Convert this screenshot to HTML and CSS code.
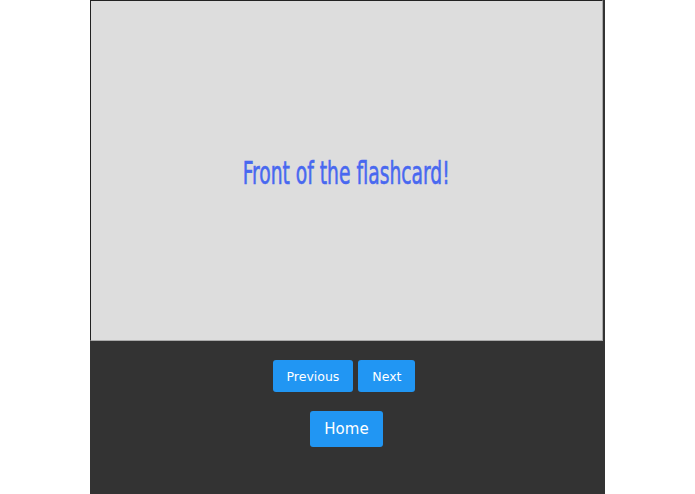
FILE: index.html
```html
<!DOCTYPE html>
<html>
<head>
<meta charset="utf-8">
<title>Flashcards</title>
<link rel="stylesheet" href="styles.css">
</head>
<body>
  <div class="deck">
    <div class="card">
      <span class="card-text">Front of the flashcard!</span>
    </div>
    <div class="controls controls-nav">
      <button class="btn">Previous</button>
      <button class="btn">Next</button>
    </div>
    <div class="controls">
      <button class="btn btn-home">Home</button>
    </div>
  </div>
</body>
</html>
```

FILE: styles.css
```css
html, body {
  margin: 0;
  padding: 0;
  background: #fff;
  height: 100%;
}

.deck {
  width: 515px;
  min-height: 100%;
  margin: 0 auto;
  background: #333;
  box-sizing: border-box;
  padding-right: 2px;
}

.card {
  height: 341px;
  background: #ddd;
  border-top: 1px solid #222;
  border-left: 1px solid #222;
  border-right: 1px solid #aaa;
  border-bottom: 1px solid #aaa;
  box-sizing: border-box;
  display: flex;
  align-items: center;
  justify-content: center;
}

/* narrow display face: condensed sans squeezed horizontally */
.card-text {
  font-family: "DejaVu Sans Condensed", "DejaVu Sans", sans-serif;
  font-size: 32px;
  color: #4868f0;
  margin-top: 4px;
  transform: scaleX(0.65);
  white-space: nowrap;
  -webkit-text-stroke: 0.6px #4868f0;
}

.controls {
  display: flex;
  justify-content: center;
  gap: 5px;
  padding-top: 19px;
}

.controls-nav {
  padding-right: 5px;
}

.btn {
  font-family: "DejaVu Sans", Verdana, sans-serif;
  font-size: 12.5px;
  color: #fff;
  background: #2196f3;
  border: none;
  border-radius: 3px;
  height: 32px;
  padding: 0 14px;
}

.btn-home {
  font-size: 15px;
  height: 36px;
  padding: 0 14px;
}
```
